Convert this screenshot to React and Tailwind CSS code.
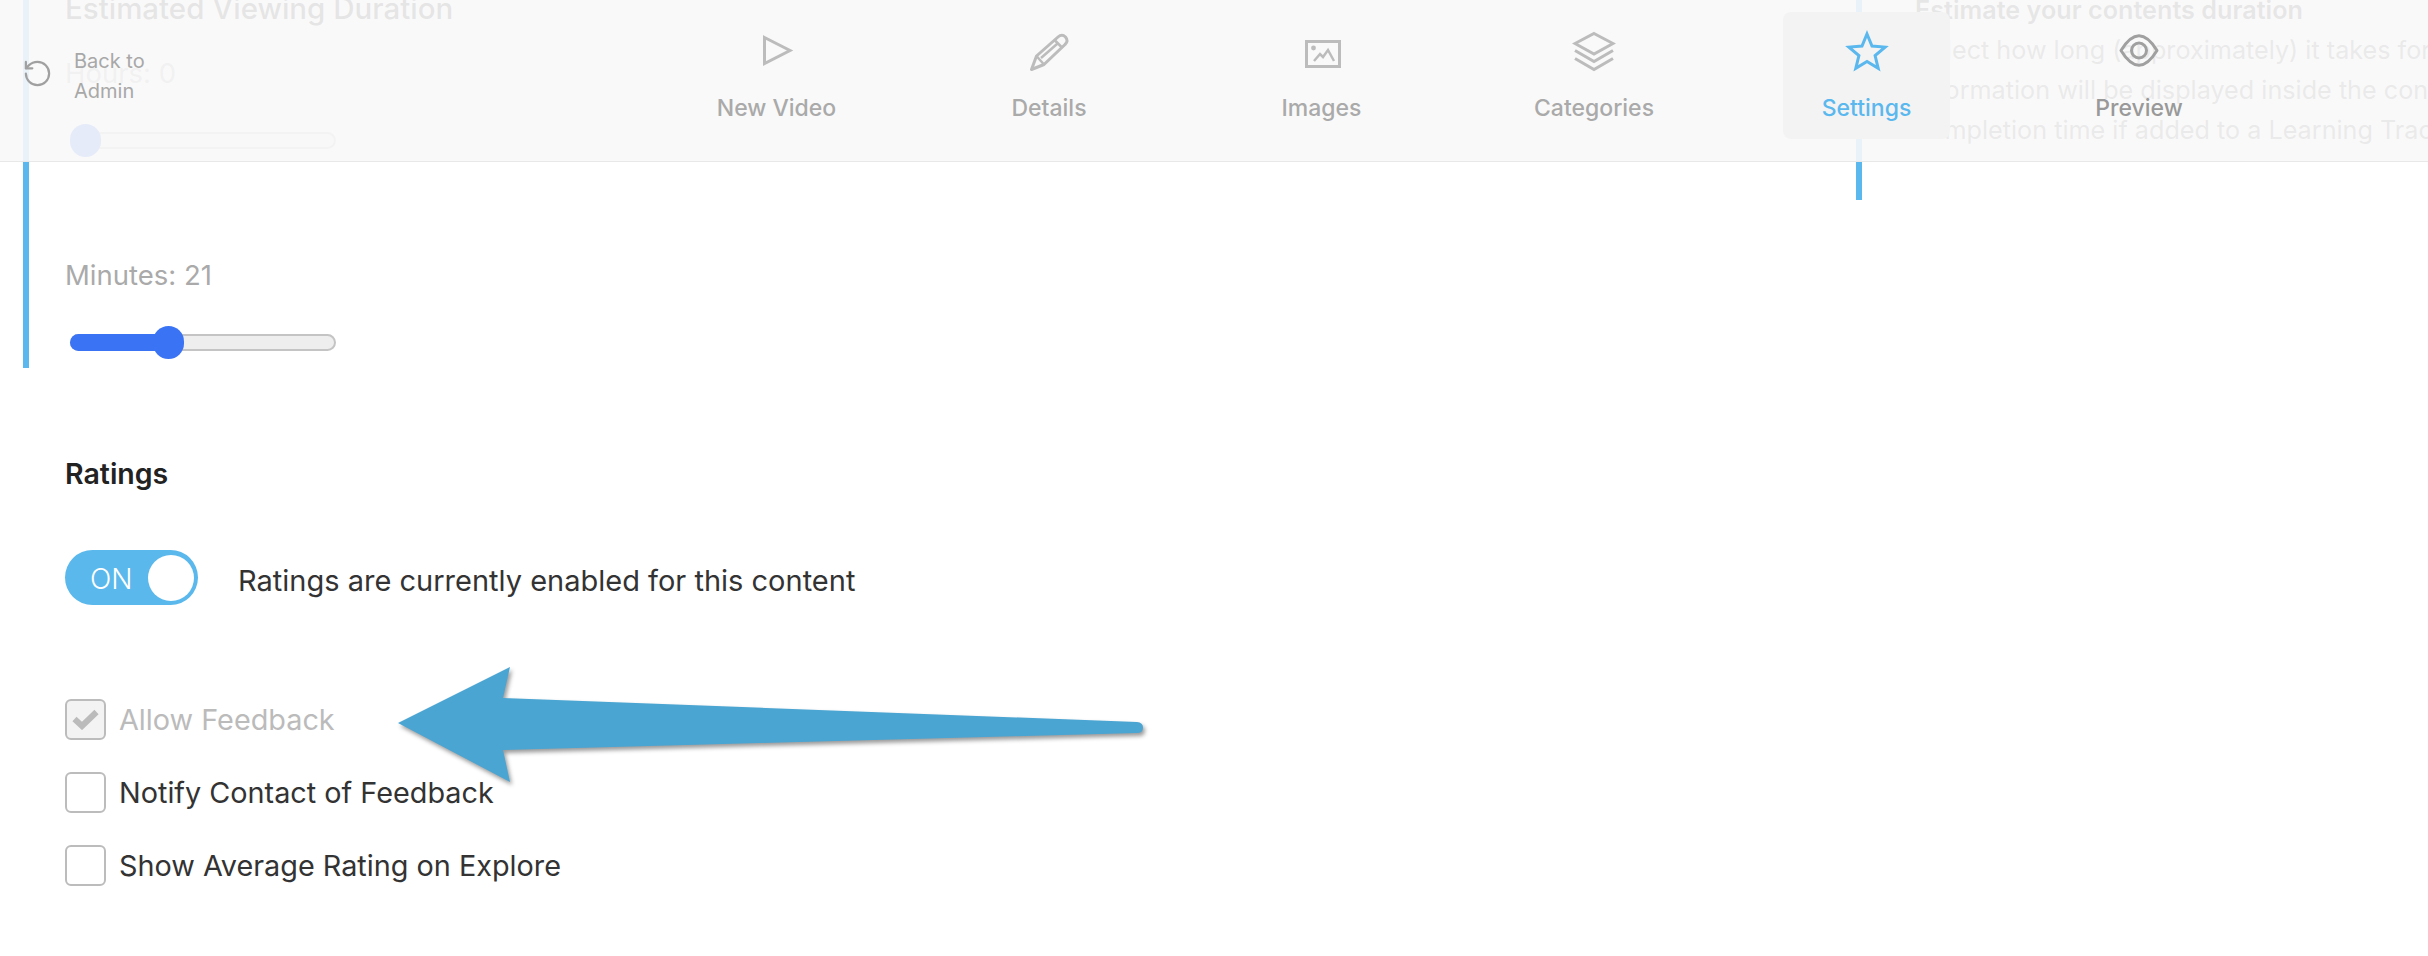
import React from "react";
import { RotateCcw } from "lucide-react";

const FONT = "font-['Inter','Liberation_Sans',sans-serif]";

function Svg({ children, className = "text-[#bcbcbc]" }) {
  return (
    <svg width="44" height="44" viewBox="0 0 44 44" fill="none" stroke="currentColor" strokeWidth="3" className={className}>
      {children}
    </svg>
  );
}

const icons = {
  play: (
    <Svg><polygon points="9.5,7.5 35,20.5 9.5,33.5" /></Svg>
  ),
  pencil: (
    <Svg>
      <path d="M4.5 39.5 L9.5 26 L31 7 Q35 3.5 38.5 7 Q42 11 38 14.5 L17 34.5 Z" strokeLinejoin="round" />
      <path d="M27.5 10 L35.5 18 M9.5 26 L17 34.5 M14 28 L30 14" strokeWidth="2.5" />
    </Svg>
  ),
  image: (
    <Svg>
      <rect x="6.5" y="11.5" width="33" height="25" />
      <circle cx="13.5" cy="18" r="2.4" fill="currentColor" stroke="none" />
      <polyline points="14,31 20,24 23,27 28,20 34,31" strokeWidth="2.5" />
    </Svg>
  ),
  layers: (
    <Svg>
      <polygon points="22,3.5 41,13.5 22,24 3,13.5" />
      <polyline points="3,20.5 22,31.5 41,20.5" />
      <polyline points="3,28.5 22,39.5 41,28.5" />
    </Svg>
  ),
  star: (
    <Svg className="text-[#5ab8ee]">
      <polygon points="22,4 27,16.1 40.1,17.1 30.1,25.6 33.2,38.4 22,31.5 10.8,38.4 13.9,25.6 3.9,17.1 17,16.1" />
    </Svg>
  ),
  eye: (
    <Svg className="text-[#a0a0a0]">
      <path d="M4 20.5 Q22 -9 40 20.5 Q22 50 4 20.5 Z" strokeLinejoin="round" />
      <circle cx="22" cy="20.5" r="7.5" />
    </Svg>
  ),
};

const navItems = [
  { icon: "play", label: "New Video" },
  { icon: "pencil", label: "Details" },
  { icon: "image", label: "Images" },
  { icon: "layers", label: "Categories" },
  { icon: "star", label: "Settings", active: true },
  { icon: "eye", label: "Preview", dark: true },
];

function Slider({ percent, thumbClass }) {
  return (
    <div className="relative ml-[5px] h-[17px] w-[266px] rounded-full border-2 border-[#c4c4c4] bg-[#eeeeee]">
      <div className="absolute -left-[2px] -top-[2px] h-[17px] rounded-l-full bg-[#3b73f5]" style={{ width: `${percent}px` }} />
      <div className={`absolute -top-[10px] h-[33px] w-[31px] rounded-full bg-[#3b73f5] ${thumbClass}`} />
    </div>
  );
}

function Check({ label, checked }) {
  return (
    <label className="flex h-[41px] items-center gap-[13px]">
      <span className={`flex h-[41px] w-[41px] items-center justify-center rounded-md border-2 border-[#bcbcbc] ${checked ? "bg-[#f3f3f3]" : "bg-white"}`}>
        {checked && (
          <svg width="27" height="21" viewBox="0 0 27 21" fill="none" stroke="#bbbbbb" strokeWidth="6">
            <path d="M2.5 10 L10 17 L24.5 3" />
          </svg>
        )}
      </span>
      <span className={`-mt-[1px] text-[28.8px] leading-[41px] ${checked ? "text-[#bbbbbb]" : "text-[#333333]"}`}>{label}</span>
    </label>
  );
}

export default function App() {
  return (
    <div className={`relative h-[956px] w-[2428px] overflow-hidden bg-white ${FONT}`}>
      <main className="-mt-[12px]">
        <div className="flex items-start">
          <section className="ml-[23px] h-[380px] w-[1833px] shrink-0 border-l-[6px] border-[#5ab8ee] pl-[36px]">
            <h2 className="text-[29.5px] font-medium leading-[40px] text-[#333333]">Estimated Viewing Duration</h2>
            <p className="mt-[28px] text-[27.5px] leading-[34px] text-[#aaaaaa]">Hours: 0</p>
            <div className="mt-[42px]">
              <Slider percent={0} thumbClass="-left-[2px]" />
            </div>
            <p className="mt-[109px] text-[27.5px] leading-[34px] text-[#aaaaaa]">Minutes: 21</p>
            <div className="mt-[42px]">
              <Slider percent={100} thumbClass="left-[81px]" />
            </div>
          </section>
          <aside className="h-[212px] min-w-0 flex-1 overflow-hidden whitespace-nowrap border-l-[6px] border-[#5ab8ee] pl-[53px] pt-[2px] text-[25.2px] leading-[40px] text-[#666666]">
            <h3 className="font-semibold text-[#444444]">Estimate your contents duration</h3>
            <p>Select how long (approximately) it takes for someone to view this</p>
            <p>information will be displayed inside the content and will contribute</p>
            <p>completion time if added to a Learning Track</p>
          </aside>
        </div>

        <div className="pl-[65px]">
          <h3 className="mt-[89px] text-[28.5px] font-semibold leading-[34px] text-[#222222]">Ratings</h3>
          <div className="mt-[59px] flex items-center gap-[40px]">
            <div className="flex h-[55px] w-[133px] items-center justify-between rounded-full bg-[#5ab8ec] pl-[25px] pr-[4px]">
              <span className="mt-[3px] text-[28px] font-light text-white">ON</span>
              <span className="h-[46px] w-[46px] rounded-full bg-white" />
            </div>
            <span className="mt-[7px] text-[29px] text-[#333333]">Ratings are currently enabled for this content</span>
          </div>
          <div className="mt-[94px] flex flex-col gap-[32px]">
            <Check label="Allow Feedback" checked />
            <Check label="Notify Contact of Feedback" />
            <Check label="Show Average Rating on Explore" />
          </div>
        </div>
      </main>

      <header className="absolute left-0 right-0 top-0 flex h-[162px] items-start border-b border-[#e8e8e8] bg-[#f8f8f8]/90">
        <div className="ml-[22px] mt-[46px] flex w-[671px] items-center gap-[21px] text-[20px] leading-[30px] text-[#a8a8a8]">
          <RotateCcw size={31} strokeWidth={1.7} className="-mt-[6px] text-[#a0a0a0]" />
          <span>Back to<br />Admin</span>
        </div>
        <nav className="mt-[12px] flex gap-[105.5px]">
          {navItems.map((item) => (
            <div
              key={item.label}
              className={`flex h-[127px] w-[167px] flex-col items-center rounded-lg pt-[18px] ${item.active ? "bg-[#f3f3f3]" : ""}`}
            >
              {icons[item.icon]}
              <span
                className={`mt-[19px] text-[23px] font-medium leading-[30px] ${
                  item.active ? "text-[#5ab8ee]" : item.dark ? "text-[#999999]" : "text-[#aaaaaa]"
                }`}
              >
                {item.label}
              </span>
            </div>
          ))}
        </nav>
      </header>

      <svg
        className="absolute left-[390px] top-[660px] drop-shadow-[2px_3px_2px_rgba(0,0,0,0.4)]"
        width="770"
        height="130"
        viewBox="390 660 770 130"
      >
        <path d="M398 723 L510 667 L503 698 L1137 722 Q1143 722.5 1143 727.5 Q1143 733 1137 733 L503 750 L510 782 Z" fill="#4aa5d3" />
      </svg>
    </div>
  );
}
